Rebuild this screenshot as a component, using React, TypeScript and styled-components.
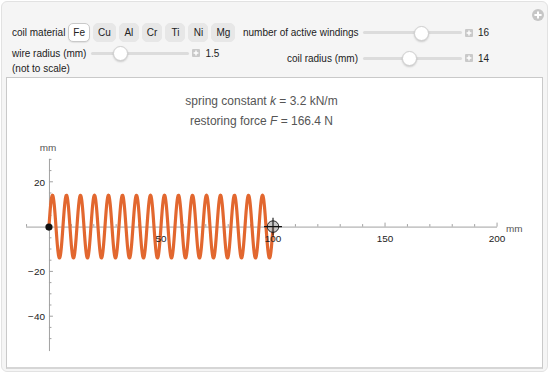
import React from 'react';
import styled, { createGlobalStyle } from 'styled-components';

const GlobalStyle = createGlobalStyle`
  html, body {
    margin: 0;
    padding: 0;
    background: #ffffff;
  }
  body {
    font-family: 'Liberation Sans', Arial, sans-serif;
  }
`;

const PanelStyled = styled.div`
  position: relative;
  box-sizing: border-box;
  width: 547px;
  margin: 1px 0 0 1px;
  padding: 21px 4px 2px 4px;
  background: #f5f5f5;
  border: 1px solid #e2e2e2;
  border-radius: 6px;
  font-size: 10px;
  color: #222;
`;

const CornerIcon = styled.div`
  position: absolute;
  top: 7px;
  right: 3px;
  width: 12px;
  height: 12px;
  display: flex;
`;

const ControlsStyled = styled.div`
  display: flex;
  padding-left: 6px;
  height: 51px;
`;

const LeftColumn = styled.div`
  display: flex;
  flex-direction: column;
  width: 231px;
`;

const RightColumn = styled.div`
  display: flex;
  flex-direction: column;
  gap: 9px;
`;

const Row = styled.div<{ $h: number; $mt?: number }>`
  display: flex;
  align-items: center;
  height: ${({ $h }) => $h}px;
  margin-top: ${({ $mt }) => $mt ?? 0}px;
  white-space: nowrap;
`;

const Label = styled.span<{ $w?: number; $right?: boolean }>`
  display: inline-block;
  width: ${({ $w }) => ($w ? `${$w}px` : 'auto')};
  text-align: ${({ $right }) => ($right ? 'right' : 'left')};
  margin-right: 5px;
  flex-shrink: 0;
`;

const ButtonBar = styled.div`
  display: flex;
  gap: 3px;
  margin-left: -2px;
`;

const MaterialButton = styled.div<{ $active?: boolean }>`
  box-sizing: border-box;
  min-width: 20px;
  height: 19px;
  padding: 0 4px;
  display: flex;
  align-items: center;
  justify-content: center;
  border-radius: 5px;
  background: ${({ $active }) => ($active ? '#ffffff' : '#e7e7e7')};
  border: 1px solid ${({ $active }) => ($active ? '#c9c9c9' : '#e7e7e7')};
  box-shadow: ${({ $active }) => ($active ? '0 1px 1px rgba(0,0,0,0.08)' : 'none')};
  color: #222;
`;

const Track = styled.div<{ $w: number }>`
  position: relative;
  width: ${({ $w }) => $w}px;
  height: 3px;
  border-radius: 2px;
  background: #dcdcdc;
  flex-shrink: 0;
`;

const Thumb = styled.div`
  position: absolute;
  top: 50%;
  width: 13px;
  height: 13px;
  margin: -7px 0 0 -7px;
  border-radius: 50%;
  background: #ffffff;
  border: 1px solid #cfcfcf;
  box-shadow: 0 1px 2px rgba(0, 0, 0, 0.18);
`;

const PlusBox = styled.div`
  width: 8px;
  height: 8px;
  margin: 0 5px 0 3px;
  display: flex;
  flex-shrink: 0;
`;

const Value = styled.span`
  color: #222;
`;

const PlotPanel = styled.div`
  box-sizing: border-box;
  width: 537px;
  height: 292px;
  margin-top: 3px;
  background: #ffffff;
  border: 1px solid #c9c9c9;
  border-bottom: 2px solid #d6d6d6;
  display: flex;
  flex-direction: column;
`;

const PlotHeader = styled.div`
  padding: 13px 26px 0 0;
  text-align: center;
  font-size: 12px;
  line-height: 20px;
  color: #555;
  i {
    font-style: italic;
  }
`;

const PlotArea = styled.svg`
  display: block;
  flex: 1;
  width: 535px;
`;

function PlusIcon({ size, round }: { size: number; round?: boolean }) {
  const c = size / 2;
  const arm = size * 0.3;
  return (
    <svg width={size} height={size} viewBox={`0 0 ${size} ${size}`}>
      {round ? (
        <circle cx={c} cy={c} r={c} fill="#c6c6c6" />
      ) : (
        <rect width={size} height={size} rx={1} fill="#c9c9c9" />
      )}
      <path
        d={`M${c - arm} ${c}H${c + arm}M${c} ${c - arm}V${c + arm}`}
        stroke="#fff"
        strokeWidth={round ? 2 : 1.4}
      />
    </svg>
  );
}

function Slider({ width, pos, value }: { width: number; pos: number; value: string }) {
  return (
    <>
      <Track $w={width}>
        <Thumb style={{ left: `${pos * 100}%` }} />
      </Track>
      <PlusBox>
        <PlusIcon size={8} />
      </PlusBox>
      <Value>{value}</Value>
    </>
  );
}

const MATERIALS = ['Fe', 'Cu', 'Al', 'Cr', 'Ti', 'Ni', 'Mg'];

// plot geometry, in page pixels
const X0 = 48;
const Y0 = 227;
const S = 2.25;
const OFFSET_X = 7;
const OFFSET_Y = 131;

function springPath() {
  const n = 900;
  const len = 100;
  const turns = 16;
  const amp = 14;
  let d = '';
  for (let i = 0; i <= n; i++) {
    const t = i / n;
    const x = X0 + len * S * t;
    const y = Y0 - amp * S * Math.sin(2 * Math.PI * turns * t);
    d += `${i === 0 ? 'M' : 'L'}${x.toFixed(2)} ${y.toFixed(2)}`;
  }
  return d;
}

function Chart() {
  const xTicks = [];
  for (let v = -10; v <= 200; v += 10) {
    const x = X0 + v * S;
    const major = v % 50 === 0;
    if (v === 0) continue;
    xTicks.push(
      <line key={`xt${v}`} x1={x} x2={x} y1={Y0} y2={Y0 - (major ? 4 : 2.5)} stroke="#a0a0a0" strokeWidth={1} />
    );
  }
  const yTicks = [];
  for (let v = -50; v <= 30; v += 5) {
    if (v === 0) continue;
    const y = Y0 - v * S;
    const major = v % 20 === 0;
    yTicks.push(
      <line key={`yt${v}`} x1={X0} x2={X0 + (major ? 4 : 2.5)} y1={y} y2={y} stroke="#a0a0a0" strokeWidth={1} />
    );
  }
  return (
    <PlotArea viewBox="0 0 535 237">
      <g transform={`translate(${-OFFSET_X} ${-OFFSET_Y})`}>
        <line x1={25} x2={498} y1={Y0 + 0.5} y2={Y0 + 0.5} stroke="#a0a0a0" strokeWidth={1} />
        <line x1={X0 + 0.5} x2={X0 + 0.5} y1={159} y2={352} stroke="#a0a0a0" strokeWidth={1} />
        {xTicks}
        {yTicks}
        <path d={springPath()} fill="none" stroke="#e2672f" strokeWidth={3.2} strokeLinejoin="round" />
        <g fontFamily="'Liberation Sans', Arial, sans-serif" fontSize={10} fill="#222">
          {[50, 100, 150, 200].map((v) => (
            <text key={v} x={X0 + v * S} y={242} textAnchor="middle">
              {v}
            </text>
          ))}
          {[20, -20, -40].map((v) => (
            <text key={v} x={44} y={Y0 - v * S + 4} textAnchor="end">
              {v < 0 ? `\u2212${-v}` : v}
            </text>
          ))}
          <text x={47} y={151} textAnchor="middle" fill="#555">mm</text>
          <text x={507} y={232} fill="#555">mm</text>
        </g>
        <circle cx={X0} cy={Y0 + 0.5} r={3.6} fill="#111" />
        <g>
          <circle cx={273} cy={Y0} r={5.8} fill="#bdbdbd" fillOpacity={0.85} stroke="#222" strokeWidth={1} />
          <path d={`M264 ${Y0}H282M273 ${Y0 - 9}V${Y0 + 9}`} stroke="#111" strokeWidth={1.1} />
        </g>
      </g>
    </PlotArea>
  );
}

export default function App() {
  return (
    <>
      <GlobalStyle />
      <PanelStyled>
        <CornerIcon>
          <PlusIcon size={12} round />
        </CornerIcon>
        <ControlsStyled>
          <LeftColumn>
            <Row $h={19}>
              <Label>coil material</Label>
              <ButtonBar>
                {MATERIALS.map((m) => (
                  <MaterialButton key={m} $active={m === 'Fe'}>
                    {m}
                  </MaterialButton>
                ))}
              </ButtonBar>
            </Row>
            <Row $h={14} $mt={4}>
              <Label>wire radius (mm)</Label>
              <Slider width={98} pos={0.29} value="1.5" />
            </Row>
            <Row $h={12} $mt={2}>
              <span>(not to scale)</span>
            </Row>
          </LeftColumn>
          <RightColumn>
            <Row $h={19}>
              <Label $w={115} $right>
                number of active windings
              </Label>
              <Slider width={99} pos={0.585} value="16" />
            </Row>
            <Row $h={14}>
              <Label $w={115} $right>
                coil radius (mm)
              </Label>
              <Slider width={99} pos={0.465} value="14" />
            </Row>
          </RightColumn>
        </ControlsStyled>
        <PlotPanel>
          <PlotHeader>
            <div>
              spring constant <i>k</i> = 3.2 kN/m
            </div>
            <div>
              restoring force <i>F</i> = 166.4 N
            </div>
          </PlotHeader>
          <Chart />
        </PlotPanel>
      </PanelStyled>
    </>
  );
}
